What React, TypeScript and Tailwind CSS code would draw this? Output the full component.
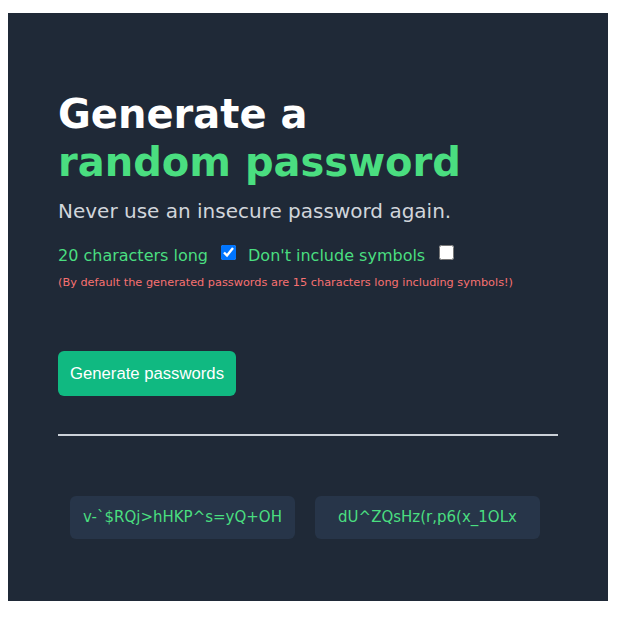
import { useState } from "react"

const passwords = ["v-`$RQj>hHKP^s=yQ+OH", "dU^ZQsHz(r,p6(x_1OLx"]

export default function App() {
  const [longer, setLonger] = useState(true)
  const [noSymbols, setNoSymbols] = useState(false)

  return (
    <div className="min-h-screen bg-white pt-[13px] pl-[8px]">
      <div
        className="w-[600px] h-[588px] bg-[#1f2937] pt-[77px] pl-[50px]"
        style={{ fontFamily: '"DejaVu Sans", Verdana, sans-serif' }}
      >
        <h1 className="text-[40px] leading-[48px] font-bold text-white">
          Generate a
          <br />
          <span className="text-[#4ade80]">random password</span>
        </h1>
        <p className="mt-[10px] text-[20px] leading-[30px] text-[#d1d5db]">
          Never use an insecure password again.
        </p>

        <div className="mt-[18px] flex items-start text-[16px] leading-[24px] text-[#4ade80]">
          <label htmlFor="long">20 characters long</label>
          <input
            id="long"
            type="checkbox"
            checked={longer}
            onChange={(e) => setLonger(e.target.checked)}
            className="ml-[13px] mr-[12px] mt-[1px] w-[15px] h-[15px]"
          />
          <label htmlFor="symbols">Don't include symbols</label>
          <input
            id="symbols"
            type="checkbox"
            checked={noSymbols}
            onChange={(e) => setNoSymbols(e.target.checked)}
            className="ml-[14px] mt-[1px] w-[15px] h-[15px]"
          />
        </div>
        <p className="mt-[7px] text-[11.3px] leading-[16px] text-[#f87171]">
          (By default the generated passwords are 15 characters long including symbols!)
        </p>

        <button
          className="mt-[60px] h-[45px] px-3 flex items-center rounded-md bg-[#10b981] text-white text-[16.7px]"
          style={{ fontFamily: '"Liberation Sans", Arial, sans-serif' }}
        >
          Generate passwords
        </button>

        <div className="mt-[38px] w-[500px] h-[2px] bg-[#cbd1d8]" />

        <div className="mt-[60px] ml-3 flex gap-5">
          {passwords.map((pw) => (
            <div
              key={pw}
              className="w-[225px] h-[43px] flex items-center justify-center rounded-md bg-[#273549] text-[15px] text-[#4ade80]"
            >
              {pw}
            </div>
          ))}
        </div>
      </div>
    </div>
  )
}
